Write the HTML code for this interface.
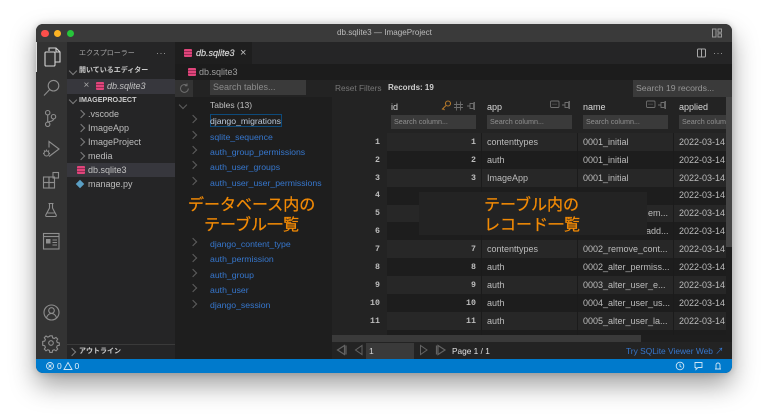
<!DOCTYPE html>
<html><head><meta charset="utf-8">
<style>
html,body{margin:0;padding:0;width:768px;height:420px;overflow:hidden;background:#fff}
body{font-family:"Liberation Sans","Noto Sans CJK JP",sans-serif;position:relative}
#w{position:absolute;left:0;top:0;width:768px;height:420px;filter:blur(.3px)}
.a{position:absolute}
.t{position:absolute;white-space:nowrap;line-height:14px;font-size:9px;color:#bcbcbc}
.r{text-align:right;font-family:"Liberation Mono",monospace;font-size:8.300px;font-weight:bold;color:#bdbdbd;margin-top:.5px}
.b{color:#3677ce;font-size:8.7px;left:210px}
.chev{position:absolute;width:5px;height:5px;border-top:1px solid #7e7e7e;border-right:1px solid #7e7e7e;transform:rotate(45deg)}
.g{border-color:#5e5e5e}
.down{transform:rotate(135deg)}
.db{position:absolute;width:8px;height:8px;background:repeating-linear-gradient(#e0457b 0 2px,#9a2c55 2px 3px);border-radius:1px}
.row{position:absolute;left:387px;width:339px;height:18px}
.inp{position:absolute;background:#3a3a3a;color:#909090;font-size:7.2px;line-height:14px;height:14px;padding-left:3px;white-space:nowrap;overflow:hidden;box-sizing:border-box}
.or{position:absolute;color:#f28a05;font-size:16px;line-height:20px;white-space:nowrap;font-family:"Noto Sans CJK JP","Liberation Sans",sans-serif;-webkit-text-stroke:.25px #f28a05}
.h{font-size:7px;font-weight:bold;color:#cccccc}
svg{position:absolute;overflow:visible}
</style></head><body><div id="w">
<div class="a" style="left:36px;top:24px;width:696px;height:349px;border-radius:7px;box-shadow:0 12px 26px rgba(0,0,0,.38),0 0 8px rgba(0,0,0,.18)"></div>
<div class="a" style="left:36px;top:24px;width:696px;height:349px;border-radius:7px;overflow:hidden;background:#1e1e1e">
 <div class="a" style="left:0;top:0;width:696px;height:18px;background:#3a3a3a"></div>
 <div class="a" style="left:0;top:18px;width:31px;height:317px;background:#333333"></div>
 <div class="a" style="left:0;top:18px;width:1px;height:30px;background:#ddd"></div>
 <div class="a" style="left:31px;top:18px;width:108px;height:317px;background:#252526"></div>
 <div class="a" style="left:139px;top:18px;width:557px;height:22px;background:#252526"></div>
 <div class="a" style="left:139px;top:18px;width:77px;height:22px;background:#1e1e1e"></div>
 <div class="a" style="left:139px;top:40px;width:557px;height:16px;background:#1c1c1c"></div>
 <div class="a" style="left:139px;top:56px;width:557px;height:17px;background:#232323"></div>
 <div class="a" style="left:139px;top:73px;width:157px;height:262px;background:#1e1e1e"></div>
 <div class="a" style="left:296px;top:73px;width:400px;height:262px;background:#232323"></div>
 <div class="a" style="left:0;top:335px;width:696px;height:14px;background:#007acc"></div>
</div>
<div class="a" style="left:41px;top:29.500px;width:7.500px;height:7.500px;border-radius:50%;background:#fc4f4b"></div>
<div class="a" style="left:53.500px;top:29.500px;width:7.500px;height:7.500px;border-radius:50%;background:#fdb423"></div>
<div class="a" style="left:66.500px;top:29.500px;width:7.500px;height:7.500px;border-radius:50%;background:#27c53b"></div>
<div class="t" style="left:337px;top:26px;font-size:8.100px;color:#bcbcbc">db.sqlite3 — ImageProject</div>
<svg style="left:712px;top:28px" width="10" height="10" fill="none" stroke="#999" stroke-width="1"><rect x=".5" y="1" width="3.5" height="8"/><rect x="6" y="1" width="3.5" height="3.2"/><rect x="6" y="5.8" width="3.5" height="3.2"/></svg>

<!-- activity icons -->
<svg style="left:36px;top:42px" width="31" height="320" fill="none" stroke="#8e8e8e" stroke-width="1.1">
 <g stroke="#d4d4d4"><path d="M13 9V6h7l4 4v10h-5"/><rect x="9" y="10" width="10" height="14" rx="1"/><path d="M20 6v4h4"/></g>
 <circle cx="17.500" cy="43.700" r="5.300"/><path d="M13.700 47.500l-5.700 6"/>
 <circle cx="11.700" cy="70.700" r="2.200"/><circle cx="11.700" cy="82.300" r="2.200"/><circle cx="17.500" cy="74.700" r="2.200"/><path d="M11.700 73v7M17.500 77c0 3-5 2-5.500 3.500"/>
 <path d="M13 105.500v-6l10 7.500-10 7.500"/><circle cx="10.500" cy="111.500" r="2.500"/><path d="M7 111.500h1M13 111.500h1M10.500 107.500v1.500M8 108.500l1 1M13 108.500l-1 1"/>
 <rect x="7.500" y="135" width="5.500" height="5.500"/><rect x="13" y="135" width="5.500" height="5.500"/><rect x="7.500" y="140.500" width="5.500" height="5.500"/><rect x="13" y="140.500" width="5.500" height="5.500"/><rect x="17" y="130.500" width="5.500" height="5.500"/>
 <path d="M12.500 161.500h5M13.500 161.500v4.500l-3.700 7q-.5 1.500 1 1.500h8.400q1.500 0 1-1.500l-3.700-7v-4.500M11.500 171h7"/>
 <rect x="7.500" y="191.500" width="15.500" height="15.500"/><path d="M7.500 194.500h15.500"/><rect x="10" y="197" width="4.500" height="4.500" fill="#8e8e8e" stroke="none"/><path d="M16.500 198h4.500M16.500 200.500h4.500M16.500 203h4.500"/>
</svg>
<svg style="left:43px;top:304px" width="18" height="18" fill="none" stroke="#8e8e8e" stroke-width="1.1"><circle cx="8.500" cy="8.500" r="7.500"/><circle cx="8.500" cy="6.500" r="2.800"/><path d="M3.500 14c1-3.500 3-4.500 5-4.500s4 1 5 4.500"/></svg>
<svg style="left:43px;top:335px" width="18" height="18" fill="none" stroke="#8e8e8e" stroke-width="1.1"><circle cx="8" cy="8" r="2.300"/><path d="M6.800 .8h2.400l.4 2 1.600.7 1.800-1.100 1.700 1.700-1.100 1.800.7 1.600 2 .4v2.400l-2 .4-.7 1.600 1.100 1.800-1.700 1.700-1.800-1.100-1.600.7-.4 2H6.800l-.4-2-1.600-.7-1.800 1.100-1.700-1.700 1.100-1.800-.7-1.600-2-.4V6.500l2-.4.7-1.600-1.100-1.800 1.700-1.700 1.800 1.100 1.600-.7z"/></svg>

<!-- sidebar -->
<div class="t" style="left:79px;top:47px;font-size:7px;color:#a8a8a8">エクスプローラー</div>
<div class="t" style="left:156px;top:46px;font-size:9px;color:#a0a0a0;letter-spacing:.5px">···</div>
<div class="chev down" style="left:70px;top:68px"></div>
<div class="t h" style="left:79px;top:64px">開いているエディター</div>
<div class="a" style="left:67px;top:79px;width:108px;height:15px;background:#37373d"></div>
<div class="t" style="left:83.500px;top:79px;font-size:10px;color:#a8a8a8">×</div>
<div class="db" style="left:95.500px;top:82px"></div>
<div class="t" style="left:107px;top:79px;font-size:9px;font-style:italic;color:#c2c2c2">db.sqlite3</div>
<div class="chev down" style="left:70px;top:97px"></div>
<div class="t h" style="left:79px;top:93px;font-size:7.200px">IMAGEPROJECT</div>
<div class="chev" style="left:78px;top:111px"></div><div class="t" style="left:88px;top:107px">.vscode</div>
<div class="chev" style="left:78px;top:125px"></div><div class="t" style="left:88px;top:121px">ImageApp</div>
<div class="chev" style="left:78px;top:139px"></div><div class="t" style="left:88px;top:135px">ImageProject</div>
<div class="chev" style="left:78px;top:153px"></div><div class="t" style="left:88px;top:149px">media</div>
<div class="a" style="left:67px;top:163px;width:108px;height:14px;background:#37373d"></div>
<div class="db" style="left:76.500px;top:166px"></div><div class="t" style="left:88px;top:163px;color:#c2c2c2">db.sqlite3</div>
<div class="a" style="left:77px;top:181px;width:6px;height:6px;background:#5b9fc4;transform:rotate(45deg)"></div><div class="t" style="left:88px;top:177px">manage.py</div>
<div class="a" style="left:67px;top:344px;width:108px;height:1px;background:#3a3a3a"></div>
<div class="chev" style="left:69px;top:349px"></div>
<div class="t h" style="left:79px;top:345px">アウトライン</div>

<!-- tab -->
<div class="db" style="left:184px;top:49px"></div>
<div class="t" style="left:196px;top:46px;font-size:9px;font-style:italic;color:#d6d6d6;-webkit-text-stroke:.2px #d6d6d6">db.sqlite3</div>
<div class="t" style="left:240px;top:46px;font-size:11px;color:#c0c0c0">×</div>
<svg style="left:697px;top:48px" width="10" height="10" fill="none" stroke="#a8a8a8" stroke-width="1"><rect x=".5" y="1" width="8" height="8" rx="1"/><path d="M4.500 1v8"/></svg>
<div class="t" style="left:713px;top:46px;font-size:9px;color:#a0a0a0;letter-spacing:.5px">···</div>
<div class="db" style="left:188px;top:68px"></div>
<div class="t" style="left:199px;top:65px;color:#a0a0a0">db.sqlite3</div>

<!-- tables pane -->
<div class="a" style="left:175px;top:80px;width:18px;height:17px;background:#333"></div>
<svg style="left:179px;top:83px" width="11" height="11" fill="none" stroke="#6e6e6e" stroke-width="1"><path d="M9.300 5.500a3.900 3.900 0 1 1-1.500-3.100M8 .5v2.200H5.800"/></svg>
<div class="inp" style="left:210px;top:80px;width:96px;height:15px;font-size:9px;color:#8a8a8a;line-height:15px">Search tables...</div>
<div class="chev down g" style="left:180px;top:102px"></div>
<div class="t" style="left:210px;top:98px;color:#c0c0c0;font-size:8.500px">Tables (13)</div>
<div class="a" style="left:210px;top:114px;width:72px;height:13px;border:1px solid #0d4a7a;box-sizing:border-box"></div>
<div class="t" style="left:210px;top:114px;color:#bccadb;font-size:8.700px">django_migrations</div>
<div class="chev g" style="left:190px;top:116px"></div>
<div class="chev g" style="left:190px;top:132px"></div><div class="t b" style="top:130px">sqlite_sequence</div>
<div class="chev g" style="left:190px;top:147px"></div><div class="t b" style="top:145px">auth_group_permissions</div>
<div class="chev g" style="left:190px;top:162px"></div><div class="t b" style="top:160px">auth_user_groups</div>
<div class="chev g" style="left:190px;top:178px"></div><div class="t b" style="top:176px">auth_user_user_permissions</div>
<div class="chev g" style="left:190px;top:239px"></div><div class="t b" style="top:237px">django_content_type</div>
<div class="chev g" style="left:190px;top:255px"></div><div class="t b" style="top:252px">auth_permission</div>
<div class="chev g" style="left:190px;top:270px"></div><div class="t b" style="top:268px">auth_group</div>
<div class="chev g" style="left:190px;top:285px"></div><div class="t b" style="top:283px">auth_user</div>
<div class="chev g" style="left:190px;top:301px"></div><div class="t b" style="top:298px">django_session</div>

<!-- top controls -->
<div class="t" style="left:335px;top:81px;color:#777;font-size:8.300px">Reset Filters</div>
<div class="t" style="left:388px;top:81px;color:#cfcfcf;font-weight:bold;font-size:8px">Records: 19</div>
<div class="inp" style="left:633px;top:80px;width:99px;height:17px;font-size:8.700px;line-height:17px;color:#969696">Search 19 records...</div>

<!-- rows -->
<div class="row" style="top:133px;background:#272727"></div>
<div class="row" style="top:151px;background:#1d1d1d"></div>
<div class="row" style="top:169px;background:#272727"></div>
<div class="row" style="top:187px;background:#1d1d1d"></div>
<div class="row" style="top:205px;background:#272727"></div>
<div class="row" style="top:222px;background:#1d1d1d"></div>
<div class="row" style="top:240px;background:#272727"></div>
<div class="row" style="top:258px;background:#1d1d1d"></div>
<div class="row" style="top:276px;background:#272727"></div>
<div class="row" style="top:294px;background:#1d1d1d"></div>
<div class="row" style="top:312px;background:#272727"></div>
<div class="row" style="top:330px;height:5px;background:#1d1d1d"></div>
<div class="a" style="left:481px;top:133px;width:1px;height:202px;background:#1b1b1b"></div>
<div class="a" style="left:577px;top:133px;width:1px;height:202px;background:#1b1b1b"></div>
<div class="a" style="left:673px;top:133px;width:1px;height:202px;background:#1b1b1b"></div>

<div class="t" style="left:391px;top:100px;color:#d8d8d8">id</div>
<div class="t" style="left:487px;top:100px;color:#d8d8d8">app</div>
<div class="t" style="left:583px;top:100px;color:#d8d8d8">name</div>
<div class="t" style="left:679px;top:100px;color:#d8d8d8">applied</div>
<svg style="left:440px;top:100px" width="40" height="12" fill="none" stroke="#6e6e6e" stroke-width=".9">
 <circle cx="8" cy="3.500" r="2.500" stroke="#b5792a" stroke-width="1.100"/><path d="M6 5.500L2 9.500M3 8.500l1.500 1.500" stroke="#b5792a" stroke-width="1.100"/>
 <path d="M16.500 1.500v9M20.500 1.500v9M14 4.500h9M14 7.500h9"/><path d="M27 6h3M30 3.500h3.500v5H30zM33.500 2.500h1v7h-1"/>
</svg>
<svg style="left:550px;top:100px" width="24" height="10" fill="none" stroke="#6e6e6e" stroke-width=".9"><rect x=".5" y="1" width="8.500" height="6.500" rx="1"/><path d="M2.500 4.200h4.500" stroke-dasharray="1 1"/><path d="M12 5h3M15 2.500h3.500v5H15zM18.500 1.500h1v7h-1"/></svg>
<svg style="left:646px;top:100px" width="24" height="10" fill="none" stroke="#6e6e6e" stroke-width=".9"><rect x=".5" y="1" width="8.500" height="6.500" rx="1"/><path d="M2.500 4.200h4.500" stroke-dasharray="1 1"/><path d="M12 5h3M15 2.500h3.500v5H15zM18.500 1.500h1v7h-1"/></svg>
<div class="inp" style="left:391px;top:115px;width:85px">Search column...</div>
<div class="inp" style="left:487px;top:115px;width:85px">Search column...</div>
<div class="inp" style="left:583px;top:115px;width:85px">Search column...</div>
<div class="inp" style="left:679px;top:115px;width:47px">Search column...</div>

<div class="t r" style="left:360px;width:20px;top:135px">1</div><div class="t r" style="left:456px;width:20px;top:135px">1</div><div class="t" style="left:487px;top:135px">contenttypes</div><div class="t" style="left:583px;top:135px">0001_initial</div><div class="t" style="left:679px;top:135px">2022-03-14</div>
<div class="t r" style="left:360px;width:20px;top:153px">2</div><div class="t r" style="left:456px;width:20px;top:153px">2</div><div class="t" style="left:487px;top:153px">auth</div><div class="t" style="left:583px;top:153px">0001_initial</div><div class="t" style="left:679px;top:153px">2022-03-14</div>
<div class="t r" style="left:360px;width:20px;top:171px">3</div><div class="t r" style="left:456px;width:20px;top:171px">3</div><div class="t" style="left:487px;top:171px">ImageApp</div><div class="t" style="left:583px;top:171px">0001_initial</div><div class="t" style="left:679px;top:171px">2022-03-14</div>
<div class="t r" style="left:360px;width:20px;top:188px">4</div><div class="t" style="left:679px;top:188px">2022-03-14</div>
<div class="t r" style="left:360px;width:20px;top:206px">5</div><div class="t" style="left:648px;top:206px">em...</div><div class="t" style="left:679px;top:206px">2022-03-14</div>
<div class="t r" style="left:360px;width:20px;top:224px">6</div><div class="t" style="left:646px;top:224px">add...</div><div class="t" style="left:679px;top:224px">2022-03-14</div>
<div class="t r" style="left:360px;width:20px;top:242px">7</div><div class="t r" style="left:456px;width:20px;top:242px">7</div><div class="t" style="left:487px;top:242px">contenttypes</div><div class="t" style="left:583px;top:242px">0002_remove_cont...</div><div class="t" style="left:679px;top:242px">2022-03-14</div>
<div class="t r" style="left:360px;width:20px;top:260px">8</div><div class="t r" style="left:456px;width:20px;top:260px">8</div><div class="t" style="left:487px;top:260px">auth</div><div class="t" style="left:583px;top:260px">0002_alter_permiss...</div><div class="t" style="left:679px;top:260px">2022-03-14</div>
<div class="t r" style="left:360px;width:20px;top:278px">9</div><div class="t r" style="left:456px;width:20px;top:278px">9</div><div class="t" style="left:487px;top:278px">auth</div><div class="t" style="left:583px;top:278px">0003_alter_user_e...</div><div class="t" style="left:679px;top:278px">2022-03-14</div>
<div class="t r" style="left:360px;width:20px;top:296px">10</div><div class="t r" style="left:456px;width:20px;top:296px">10</div><div class="t" style="left:487px;top:296px">auth</div><div class="t" style="left:583px;top:296px">0004_alter_user_us...</div><div class="t" style="left:679px;top:296px">2022-03-14</div>
<div class="t r" style="left:360px;width:20px;top:314px">11</div><div class="t r" style="left:456px;width:20px;top:314px">11</div><div class="t" style="left:487px;top:314px">auth</div><div class="t" style="left:583px;top:314px">0005_alter_user_la...</div><div class="t" style="left:679px;top:314px">2022-03-14</div>

<!-- scrollbars -->
<div class="a" style="left:726px;top:97px;width:6px;height:150px;background:#454545"></div>
<div class="a" style="left:726px;top:247px;width:6px;height:95px;background:#1e1e1e"></div>
<div class="a" style="left:332px;top:335px;width:309px;height:7px;background:#3a3a3a"></div>
<div class="a" style="left:641px;top:335px;width:85px;height:7px;background:#1e1e1e"></div>

<!-- overlay -->
<div class="a" style="left:419px;top:192px;width:228px;height:43px;background:#232323"></div>
<div class="or" style="left:188px;top:193px">データベース内の</div>
<div class="or" style="left:204px;top:213px">テーブル一覧</div>
<div class="or" style="left:484px;top:193px">テーブル内の</div>
<div class="or" style="left:484px;top:213px">レコード一覧</div>

<!-- pager -->
<svg style="left:336px;top:344px" width="110" height="12" fill="none" stroke="#626262" stroke-width="1"><path d="M8.500 1.500v9L1.500 6zM10 1.500v9" stroke-width="1.200"/><path d="M26 1.500v9L19.500 6z"/><path d="M84.500 1.500v9L91 6z"/><path d="M102 1.500v9L109 6zM100.500 1.500v9" stroke-width="1.200"/></svg>
<div class="a" style="left:366px;top:343px;width:48px;height:16px;background:#3a3a3a"></div>
<div class="t" style="left:369px;top:344px;color:#d6d6d6;font-size:8.500px">1</div>
<div class="t" style="left:452px;top:344px;color:#e2e2e2;font-size:8.300px">Page 1 / 1</div>
<div class="t" style="left:626px;top:344px;color:#3677ce;font-size:8.400px">Try SQLite Viewer Web ↗</div>

<!-- status -->
<svg style="left:46px;top:361px" width="34" height="10" fill="none" stroke="#cfe6f6" stroke-width=".9"><circle cx="4" cy="5" r="3.500"/><path d="M2.500 3.500l3 3M5.500 3.500l-3 3"/><path d="M22 1.500l4 7h-8z"/></svg>
<div class="t" style="left:57px;top:359px;color:#e4f1fa;font-size:8.500px">0</div>
<div class="t" style="left:74.500px;top:359px;color:#e4f1fa;font-size:8.500px">0</div>
<svg style="left:675px;top:361px" width="50" height="10" fill="none" stroke="#cfe6f6" stroke-width=".9"><circle cx="5" cy="5" r="3.800"/><path d="M5 2.800v2.400l1.500 1"/><path d="M20 1.500h7v5h-4l-2 2V6.500h-1z"/><path d="M40 8h6M41 7.500V4a2 2 0 0 1 4 0v3.500"/></svg>
</div></body></html>
